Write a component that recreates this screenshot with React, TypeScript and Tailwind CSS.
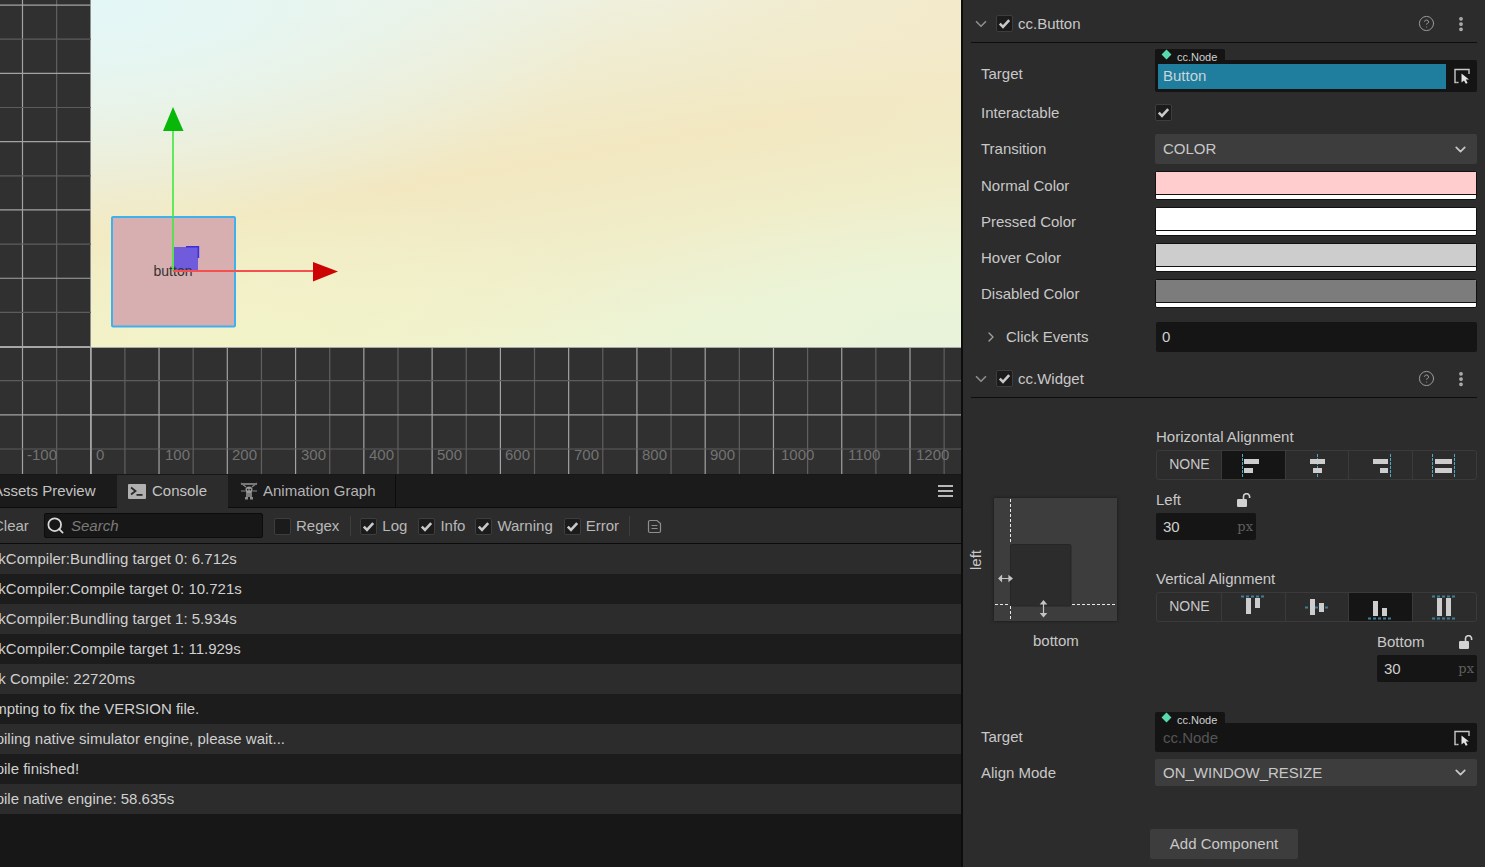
import React from "react";
import { ChevronDown, ChevronRight, CircleHelp, EllipsisVertical, Search } from "lucide-react";

const W = 961;
const H = 474;
const majors = Array.from({ length: 14 }, (_, i) => 22.5 + i * 68.27);
const minors = majors.map((x) => x + 34.13);
const rows = Array.from({ length: 14 }, (_, i) => 449 - i * 34.15);
const rulerLabels: [string, number][] = [
  ["-100", 27], ["0", 96], ["100", 165], ["200", 232], ["300", 301], ["400", 369], ["500", 437],
  ["600", 505], ["700", 574], ["800", 642], ["900", 710], ["1000", 781], ["1100", 848], ["1200", 916],
];

function Glow({ id, cx, cy, rx, ry, color }: { id: string; cx: number; cy: number; rx: number; ry: number; color: string }) {
  return (
    <radialGradient id={id} gradientUnits="userSpaceOnUse" cx="0" cy="0" r="1" gradientTransform={`translate(${cx} ${cy}) scale(${rx} ${ry})`}>
      <stop offset="0" stopColor={color} />
      <stop offset="1" stopColor={color} stopOpacity="0" />
    </radialGradient>
  );
}

function Scene() {
  return (
    <div className="relative h-[474px] w-full shrink-0 bg-[#303030]">
      <svg width={W} height={H} className="absolute inset-0 block">
        <defs>
          <linearGradient id="bg" gradientUnits="userSpaceOnUse" x1="466" y1="-16" x2="534" y2="356">
            <stop offset="0" stopColor="#eef2e4" />
            <stop offset="0.5" stopColor="#f2e7c0" />
            <stop offset="1" stopColor="#eef4d4" />
          </linearGradient>
          <Glow id="g1" cx={91} cy={0} rx={520} ry={230} color="#e3f7f7" />
          <Glow id="g2" cx={230} cy={347} rx={420} ry={170} color="#f3f3c8" />
          <Glow id="g3" cx={961} cy={347} rx={430} ry={150} color="#e8f3da" />
          <Glow id="g4" cx={961} cy={10} rx={300} ry={150} color="#f3eacb" />
        </defs>
        {minors.map((x) => <line key={x} x1={x} x2={x} y1={0} y2={H} stroke="#606060" strokeWidth="1.2" />)}
        {majors.map((x) => <line key={x} x1={x} x2={x} y1={0} y2={H} stroke="#a3a3a3" strokeWidth="1.2" />)}
        {rows.map((y, i) => <line key={y} x1={0} x2={W} y1={y} y2={y} stroke={i % 2 ? "#a3a3a3" : "#5c5c5c"} strokeWidth="1.2" />)}
        <rect x="91" y="0" width="870" height="347" fill="url(#bg)" />
        <rect x="91" y="0" width="870" height="347" fill="url(#g1)" />
        <rect x="91" y="0" width="870" height="347" fill="url(#g2)" />
        <rect x="91" y="0" width="870" height="347" fill="url(#g3)" />
        <rect x="91" y="0" width="870" height="347" fill="url(#g4)" />
        <line x1="0" x2={W} y1="347.5" y2="347.5" stroke="#a8a8a8" strokeWidth="1" />
        <line x1="91" x2="91" y1="347" y2={H} stroke="#b5b5b5" strokeWidth="1.2" />
        {rulerLabels.map(([t, x]) => (
          <text key={t} x={x} y="460" fontSize="15" fill="#737373" fontFamily="'Liberation Sans', sans-serif">{t}</text>
        ))}
        <rect x="112" y="217" width="123" height="109.5" rx="1" fill="#d8afb0" stroke="#3fb0ee" strokeWidth="2" />
        <rect x="174" y="247" width="24" height="24" fill="#6f5bdc" />
        <path d="M186 246.8H198.4V258" fill="none" stroke="#3b2de2" strokeWidth="1.6" />
        <text x="173" y="276" fontSize="14" fill="#333" textAnchor="middle" fontFamily="'Liberation Sans', sans-serif">button</text>
        <line x1="173" x2="173" y1="130" y2="271" stroke="#3ee83e" strokeWidth="1.6" />
        <path d="M173 107L183.5 131H163Z" fill="#08b808" />
        <line x1="173" x2="314" y1="271" y2="271" stroke="#f45050" strokeWidth="2" />
        <path d="M313 262L338 271.5L313 281.5Z" fill="#cc0404" />
      </svg>
    </div>
  );
}

function Check({ on = true }: { on?: boolean }) {
  return (
    <span className="flex h-[17px] w-[17px] shrink-0 items-center justify-center rounded-[2px] border border-[#3d3d3d] bg-[#1b1b1b]">
      {on && (
        <svg width="13" height="13" viewBox="0 0 13 13">
          <path d="M1.8 6.6L5 9.8L11.2 3.2" fill="none" stroke="#c8c8c8" strokeWidth="2.6" />
        </svg>
      )}
    </span>
  );
}

function Filter({ label, className, on = true }: { label: string; className: string; on?: boolean }) {
  return (
    <div className={"flex items-center gap-[5px] " + className}>
      <Check on={on} />
      <span>{label}</span>
    </div>
  );
}

function ConsoleIcon() {
  return (
    <svg width="18" height="15" viewBox="0 0 18 15" className="shrink-0">
      <rect width="18" height="15" rx="1" fill="#b0b0b0" />
      <path d="M3 3.5L7.5 7L3 10.5" fill="none" stroke="#2a2a2a" strokeWidth="1.8" />
      <rect x="8.5" y="10" width="6" height="1.8" fill="#2a2a2a" />
    </svg>
  );
}

function GraphIcon() {
  return (
    <svg width="18" height="18" viewBox="0 0 18 18" className="shrink-0">
      <g stroke="#8a8a8a" strokeWidth="1.2" fill="none">
        <path d="M1 1L6 5M17 1L12 5M1 9H5M13 9H17" />
      </g>
      <rect x="1" y="1" width="16" height="2" fill="#777" />
      <circle cx="9" cy="8" r="3.6" fill="#9a9a9a" />
      <rect x="6" y="11" width="6" height="4" fill="#7c7c7c" />
      <rect x="5" y="15" width="3" height="2.5" fill="#8c8c8c" />
      <rect x="10" y="15" width="3" height="2.5" fill="#8c8c8c" />
      <circle cx="7.7" cy="7.6" r=".9" fill="#222" />
      <circle cx="10.3" cy="7.6" r=".9" fill="#222" />
    </svg>
  );
}

const logs = [
  "TaskCompiler:Bundling target 0: 6.712s",
  "TaskCompiler:Compile target 0: 10.721s",
  "TaskCompiler:Bundling target 1: 5.934s",
  "TaskCompiler:Compile target 1: 11.929s",
  "Task Compile: 22720ms",
];
const logsB: [string, string][] = [
  ["Attempting to fix the VERSION file.", "-ml-[32.5px]"],
  ["Compiling native simulator engine, please wait...", "-ml-[36px]"],
  ["Compile finished!", "-ml-[36px]"],
  ["Compile native engine: 58.635s", "-ml-[36px]"],
];

function ConsolePanel() {
  return (
    <div className="flex min-h-0 flex-1 flex-col overflow-hidden bg-[#171717] text-[15px] text-[#c3c3c3]">
      <div className="mt-px flex h-[33px] shrink-0 items-stretch border-b border-[#0c0c0c] bg-[#1b1b1b]">
        <div className="-ml-[7px] flex w-[124px] items-center">Assets Preview</div>
        <div className="flex h-[33px] w-[111px] items-center gap-[6px] bg-[#2c2c2c] pl-[11px]">
          <ConsoleIcon />
          <span>Console</span>
        </div>
        <div className="flex w-[168px] items-center gap-[5px] border-r border-[#0c0c0c] pl-[12px] text-[#b4b4b4]">
          <GraphIcon />
          <span>Animation Graph</span>
        </div>
        <div className="ml-auto flex items-center pr-[8px]">
          <svg width="15" height="12" viewBox="0 0 15 12">
            <path d="M0 1H15M0 6H15M0 11H15" stroke="#b8b8b8" strokeWidth="2" />
          </svg>
        </div>
      </div>
      <div className="flex h-[36px] shrink-0 items-center border-b border-[#0c0c0c] bg-[#2c2c2c] pt-[1px] text-[#b8b8b8]">
        <span className="-ml-[7px] w-[51px] shrink-0">Clear</span>
        <div className="-mt-[1px] flex h-[25px] w-[219px] shrink-0 items-center gap-[6px] rounded-[2px] border border-[#0c0c0c] bg-[#171717] pl-[1px]">
          <Search size={19} strokeWidth={2.2} className="text-[#d8d8d8]" />
          <span className="pt-[1px] italic text-[#7a7a7a]">Search</span>
        </div>
        <Filter label="Regex" on={false} className="ml-[11px]" />
        <span className="ml-[11px] h-[20px] w-px bg-[#3e3e3e]" />
        <Filter label="Log" className="ml-[9px]" />
        <Filter label="Info" className="ml-[11px]" />
        <Filter label="Warning" className="ml-[10px]" />
        <Filter label="Error" className="ml-[11px]" />
        <span className="ml-[10px] h-[20px] w-px bg-[#3e3e3e]" />
        <svg width="15" height="15" viewBox="0 0 15 15" className="ml-[17px]">
          <path d="M1.5 3A1.5 1.5 0 0 1 3 1.5H10L13.5 4.5V12A1.5 1.5 0 0 1 12 13.5H3A1.5 1.5 0 0 1 1.5 12Z" fill="none" stroke="#8f8f8f" strokeWidth="1.2" />
          <path d="M4.5 6.5H10.5M4.5 9.5H10.5" stroke="#8f8f8f" strokeWidth="1.2" />
        </svg>
      </div>
      <div className="text-[15px] text-[#d0d0d0]">
        {logs.map((t, i) => (
          <div key={t} className={"flex h-[30px] items-center whitespace-nowrap " + (i % 2 === 0 ? "bg-[#2c2c2c]" : "bg-[#1c1c1c]")}>
            <span className="-ml-[25px]">{t}</span>
          </div>
        ))}
        {logsB.map(([t, m], i) => (
          <div key={t} className={"flex h-[30px] items-center whitespace-nowrap " + (i % 2 === 0 ? "bg-[#1c1c1c]" : "bg-[#2c2c2c]")}>
            <span className={m}>{t}</span>
          </div>
        ))}
      </div>
    </div>
  );
}

function PickerIcon() {
  return (
    <svg width="16" height="16" viewBox="0 0 16 16" className="shrink-0">
      <path d="M2.5 14.5H1V1.5H15V6" fill="none" stroke="#c8c8c8" strokeWidth="1.4" />
      <path d="M2.5 14.5H4.5" stroke="#c8c8c8" strokeWidth="1.4" />
      <path d="M7.5 5.5L15 11.5H11.8L13.6 15L11.8 15.8L10 12.4L7.5 14.6Z" fill="#e4e4e4" />
    </svg>
  );
}

function LockIcon() {
  return (
    <svg width="14" height="14" viewBox="0 0 14 14" className="shrink-0">
      <rect x="0" y="6" width="10" height="8" rx="1.2" fill="#d2d2d2" />
      <path d="M6.5 6.5V4A3 3 0 0 1 12.6 3.4V5" fill="none" stroke="#d2d2d2" strokeWidth="1.6" />
    </svg>
  );
}

function CompHeader({ name }: { name: string }) {
  return (
    <div className="flex h-[43px] items-center border-b border-[#0d0d0d] pt-[5px] text-[15px] text-[#c8c8c8]">
      <ChevronDown size={18} strokeWidth={2.2} className="ml-[1px] text-[#8d8d8d]" />
      <span className="ml-[6px]"><Check /></span>
      <span className="ml-[5px]">{name}</span>
      <CircleHelp size={17} strokeWidth={1.4} className="ml-auto text-[#9c9c9c]" />
      <EllipsisVertical size={18} strokeWidth={3} className="ml-[17px] mr-[7px] text-[#b4b4b4]" />
    </div>
  );
}

function NodeField({ value, active, h }: { value: string; active?: boolean; h: string }) {
  return (
    <div className="w-[322px]">
      <div className="flex h-[11px] w-[70px] items-center gap-[7px] rounded-t-[2px] bg-[#141414] pl-[8px] text-[11px] leading-none text-[#d0d0d0]">
        <span className="h-[7px] w-[7px] rotate-45 bg-[#5bd9ae]" />
        <span className="pt-[6px]">cc.Node</span>
      </div>
      <div className={"flex items-center rounded-[2px] rounded-tl-none bg-[#141414] pl-[3px] pr-[7px] " + h}>
        <div className={"flex h-[25px] flex-1 items-center pl-[5px] " + (active ? "bg-[#1f7e9d] text-[#c8d4da]" : "text-[#555]")}>{value}</div>
        <span className="ml-[8px]"><PickerIcon /></span>
      </div>
    </div>
  );
}

function Label({ children, className = "" }: { children: React.ReactNode; className?: string }) {
  return <span className={"w-[184px] shrink-0 pl-[10px] " + className}>{children}</span>;
}

function SelectBox({ value }: { value: string }) {
  return (
    <div className="flex h-full w-[322px] items-center rounded-[2px] bg-[#3d3d3d] pl-[8px] pr-[8px] text-[#c8c8c8]">
      <span>{value}</span>
      <ChevronDown size={17} strokeWidth={2.4} className="ml-auto text-[#c8c8c8]" />
    </div>
  );
}

function ColorRow({ label, color }: { label: string; color: string }) {
  return (
    <div className="mb-[7px] flex h-[29px] items-center">
      <Label>{label}</Label>
      <div className="h-[29px] w-[322px] overflow-hidden rounded-[2px] border border-[#111] bg-white">
        <div className={"h-[23px] border-b border-[#111] " + color} />
      </div>
    </div>
  );
}

const barFill = "#cdcdcd";
const hi = "#4ea9c6";
const lo = "#3c7f96";
type Bar = [number, number, number, number];

function AlignIcon({ bars, lines, dashes }: { bars: Bar[]; lines?: number[]; dashes?: number[] }) {
  return (
    <svg width="64" height="29" viewBox="0 0 64 29" className="-ml-[2px] block">
      {lines?.map((x) => <line key={x} x1={x + 0.5} x2={x + 0.5} y1="3" y2="26" stroke={hi} strokeWidth="1" strokeDasharray="3 1" />)}
      {dashes?.map((y) => <line key={y} x1="21" x2="44" y1={y + 0.5} y2={y + 0.5} stroke={lo} strokeWidth="2" strokeDasharray="3 2" />)}
      {bars.map(([x, y, w, h], i) => <rect key={i} x={x} y={y} width={w} height={h} fill={barFill} />)}
    </svg>
  );
}

function AlignGroup({ active, icons }: { active: number; icons: React.ReactNode[] }) {
  return (
    <div className="flex h-[30px] w-[321px] overflow-hidden rounded-[3px] border border-[#3a3a3a] text-[14px]">
      <div className="flex w-[64px] items-center justify-center pb-[2px] pl-[1px] text-[#c8c8c8]">NONE</div>
      {icons.map((ic, i) => (
        <div key={i} className={"w-[64px] border-l border-[#3a3a3a] " + (i === active ? "bg-[#151515]" : "")}>{ic}</div>
      ))}
    </div>
  );
}

function PxInput({ v }: { v: string }) {
  return (
    <div className="flex h-[27px] w-[100px] items-center justify-between rounded-[2px] bg-[#151515] pl-[7px] pr-[3px] text-[#d0d0d0]">
      <span>{v}</span>
      <span className="text-[13px] text-[#5e5e5e] [font-family:'DejaVu_Serif',serif]">px</span>
    </div>
  );
}

function Diagram() {
  return (
    <div className="relative h-[123px] w-[123px] bg-[#3d3d3d] shadow-[0_0_3px_#00000080]">
      <svg width="123" height="123" viewBox="0 0 123 123" className="block">
        <rect x="16.5" y="46.5" width="60.5" height="61.5" rx="1.5" fill="#2c2c2c" stroke="#262626" />
        <path d="M16.5 1V46M16.5 108V123M1 106.5H16M78 106.5H123" stroke="#e8e8e8" strokeDasharray="3 2" fill="none" />
        <path d="M5 80.5H15M5 80.5L7.5 78V83ZM18 80.5L15 78V83Z" stroke="#c4c4c4" fill="#c4c4c4" strokeWidth="1.2" />
        <path d="M49.5 103V118M49.5 103L47 106H52ZM49.5 118.5L47 115.5H52Z" stroke="#c4c4c4" fill="#c4c4c4" strokeWidth="1.2" />
      </svg>
    </div>
  );
}

function Inspector() {
  return (
    <div className="h-full w-[522px] shrink-0 overflow-hidden bg-[#2c2c2c] pl-[8px] pr-[8px] text-[15px] leading-[20px] text-[#c8c8c8]">
      <CompHeader name="cc.Button" />
      <div className="mt-[6px] flex items-center">
        <Label className="mt-[6px]">Target</Label>
        <NodeField value="Button" active h="h-[32px]" />
      </div>
      <div className="mt-[12px] flex h-[17px] items-center">
        <Label>Interactable</Label>
        <Check />
      </div>
      <div className="mt-[13px] flex h-[30px] items-center">
        <Label>Transition</Label>
        <SelectBox value="COLOR" />
      </div>
      <div className="mt-[7px]">
        <ColorRow label="Normal Color" color="bg-[#ffcdcd]" />
        <ColorRow label="Pressed Color" color="bg-white" />
        <ColorRow label="Hover Color" color="bg-[#cdcdcd]" />
        <ColorRow label="Disabled Color" color="bg-[#7c7c7c]" />
      </div>
      <div className="mt-[14px] flex h-[30px] items-center">
        <span className="flex w-[185px] shrink-0 items-center pl-[12px]">
          <ChevronRight size={16} className="text-[#a0a0a0]" />
          <span className="ml-[7px]">Click Events</span>
        </span>
        <div className="flex h-[30px] w-[321px] items-center rounded-[2px] bg-[#151515] pl-[6px] text-[#d0d0d0]">0</div>
      </div>
      <div className="mt-[3px]">
        <CompHeader name="cc.Widget" />
      </div>
      <div className="flex">
        <div className="w-[185px] shrink-0">
          <div className="flex pt-[100px]">
            <div className="flex h-[123px] w-[23px] shrink-0 items-center">
              <span className="-ml-[5px] -rotate-90">left</span>
            </div>
            <Diagram />
          </div>
          <div className="mt-[10px] pl-[62px]">bottom</div>
        </div>
        <div className="w-[321px] pt-[29px]">
          <div className="h-[23px]">Horizontal Alignment</div>
          <AlignGroup
            active={0}
            icons={[
              <AlignIcon key="0" lines={[22]} bars={[[24, 8, 15, 5], [24, 17, 9, 5]]} />,
              <AlignIcon key="1" lines={[33]} bars={[[26, 8, 15, 5], [29, 17, 9, 5]]} />,
              <AlignIcon key="2" lines={[43]} bars={[[26, 8, 15, 5], [33, 17, 8, 5]]} />,
              <AlignIcon key="3" lines={[21, 43]} bars={[[24, 8, 17, 5], [24, 17, 17, 5]]} />,
            ]}
          />
          <div className="mt-[9px] flex h-[24px] w-[100px] items-center justify-between pb-[3px] pr-[5px]">
            <span>Left</span>
            <LockIcon />
          </div>
          <PxInput v="30" />
          <div className="mt-[29px] h-[23px]">Vertical Alignment</div>
          <AlignGroup
            active={2}
            icons={[
              <AlignIcon key="0" dashes={[3]} bars={[[26, 5, 5, 16], [35, 5, 5, 10]]} />,
              <AlignIcon key="1" dashes={[14]} bars={[[26, 6, 5, 16], [35, 10, 5, 9]]} />,
              <AlignIcon key="2" dashes={[25]} bars={[[26, 8, 5, 15], [35, 15, 5, 8]]} />,
              <AlignIcon key="3" dashes={[3, 25]} bars={[[26, 5, 5, 18], [35, 5, 5, 18]]} />,
            ]}
          />
          <div className="ml-[221px] mt-[9px] flex h-[24px] w-[100px] items-center justify-between pb-[3px] pr-[4px]">
            <span>Bottom</span>
            <LockIcon />
          </div>
          <div className="ml-[221px]"><PxInput v="30" /></div>
        </div>
      </div>
      <div className="mt-[30px] flex items-center">
        <Label className="mt-[10px]">Target</Label>
        <NodeField value="cc.Node" h="h-[29px]" />
      </div>
      <div className="mt-[7px] flex h-[27px] items-center">
        <Label>Align Mode</Label>
        <SelectBox value="ON_WINDOW_RESIZE" />
      </div>
      <div className="ml-[179px] mt-[43px] flex h-[30px] w-[148px] items-center justify-center rounded-[2px] bg-[#3d3d3d]">Add Component</div>
    </div>
  );
}

export default function App() {
  return (
    <div className="flex h-[867px] w-[1485px] overflow-hidden bg-[#2c2c2c] [font-family:'Liberation_Sans',Arial,sans-serif]">
      <div className="flex h-full w-[961px] shrink-0 flex-col overflow-hidden">
        <Scene />
        <ConsolePanel />
      </div>
      <div className="w-[2px] shrink-0 bg-[#0d0d0d]" />
      <Inspector />
    </div>
  );
}
